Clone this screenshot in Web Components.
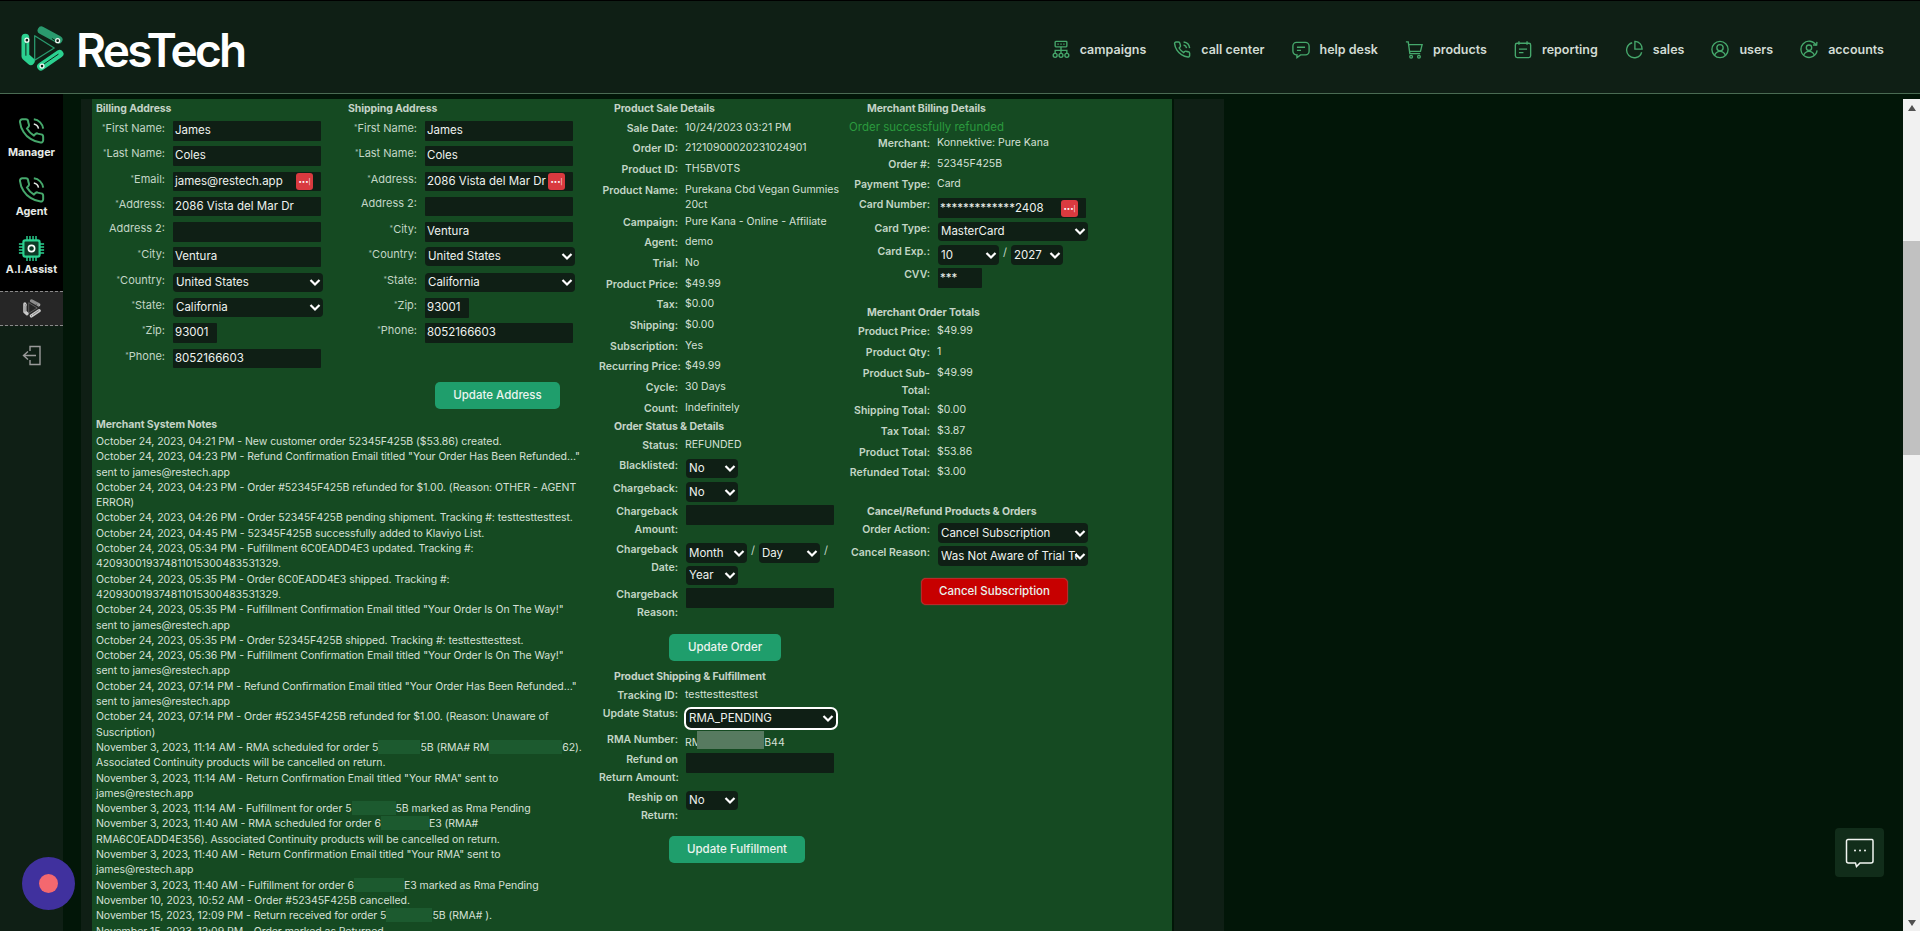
<!DOCTYPE html>
<html>
<head>
<meta charset="utf-8">
<title>ResTech</title>
<style>
  html, body { margin: 0; height: 100%; overflow: hidden; background: #021608; }
  body { font-family: "Inter", "Liberation Sans", sans-serif; }
</style>
</head>
<body>
<order-page></order-page>
<script>
const KEY_CSS = `
  .key { position: absolute; right: 8px; top: 1.5px; width: 17px; height: 17px; border-radius: 3px; background: #d93a3f; color: #fff; font-size: 6px; line-height: 17px; text-align: center; }
`;
const PHONE = `<path d="M22 16.9v3a2 2 0 0 1-2.2 2 19.8 19.8 0 0 1-8.600-3.100 19.500 19.500 0 0 1-6-6 19.800 19.800 0 0 1-3.100-8.700A2 2 0 0 1 4.100 2h3a2 2 0 0 1 2 1.700c.1 1 .4 1.900.7 2.800a2 2 0 0 1-.5 2.100L8.100 9.900a16 16 0 0 0 6 6l1.300-1.300a2 2 0 0 1 2.100-.4c.9.300 1.800.6 2.800.7a2 2 0 0 1 1.700 2z"/>`;

class BrandLogo extends HTMLElement {
  constructor() {
    super();
    this.attachShadow({ mode: 'open' });
    const bright = this.getAttribute('color') || '#2bd190';
    const dim = this.getAttribute('dim') || '#2a9a6e';
    const ring = this.getAttribute('ring') || '#f4f8f5';
    const bg = this.getAttribute('bg') || '#0f1f15';
    const w = this.getAttribute('size') || 44;
    this.shadowRoot.innerHTML = `
      <style>:host { display: inline-flex; } svg { display: block; }</style>
      <svg width="${w}" height="${w * 48 / 44}" viewBox="0 0 44 48" fill="none" stroke-linecap="round" stroke-linejoin="round">
        <path d="M14 10 L14 35 L34 22.500 Z" stroke="${dim}" stroke-width="1.300"/>
        <path d="M4.500 12 V31 L10 36" stroke="${bright}" stroke-width="8"/>
        <path d="M21 4.500 L38.500 14" stroke="${dim}" stroke-width="8"/>
        <path d="M20.500 41.500 L39.500 28.500" stroke="${bright}" stroke-width="8"/>
        <path d="M32 13 L36 15.500 M24 38.500 L38 29 M5 18 V30" stroke="${bg}" stroke-width="1"/>
        <circle cx="6" cy="14.500" r="2" fill="${bg}" stroke="${ring}" stroke-width="1.300"/>
        <circle cx="37.500" cy="15" r="2" fill="${bg}" stroke="${ring}" stroke-width="1.300"/>
        <circle cx="21.500" cy="41" r="2" fill="${bg}" stroke="${ring}" stroke-width="1.300"/>
      </svg>`;
  }
}
customElements.define('brand-logo', BrandLogo);

const NAV_ICONS = {
  campaigns: '<rect x="3.500" y="1" width="13" height="6" rx=".8"/><path d="M6 4h1.500M9.300 4h1.500M12.500 4h1.500M10 7v4M3.500 14v-3h13v3M10 11v3"/><circle cx="3.500" cy="16.500" r="2.200"/><circle cx="10" cy="16.500" r="2.200"/><circle cx="16.500" cy="16.500" r="2.200"/>',
  call: '<g transform="scale(.84)" stroke-width="1.900">' + PHONE + '<path d="M14 2a9 9 0 0 1 8 8M14 6a5 5 0 0 1 4 4"/></g>',
  help: '<path d="M5 2h10a4 4 0 0 1 4 4v6a4 4 0 0 1-4 4H9.500L5.500 19v-3.100A4 4 0 0 1 1 12V6a4 4 0 0 1 4-4z"/><path d="M5.500 7.500h9M5.500 11h4.500"/>',
  products: '<path d="M1 1.500h2.600l1.800 13h11.500"/><path d="M4 4.500h15l-1.800 7.500H5"/><circle cx="6.800" cy="18" r="1.500"/><circle cx="15.500" cy="18" r="1.500"/>',
  reporting: '<rect x="1.500" y="3" width="17" height="16" rx="2"/><path d="M5.500 .8v4M14.500 .8v4M5.500 9.500h9M5.500 13.500h5"/>',
  sales: '<path d="M8 2.500A8.500 8.500 0 1 0 18.500 13"/><path d="M11 1h.5a8 8 0 0 1 7.500 8.500h-8z"/>',
  users: '<circle cx="10" cy="10" r="9"/><circle cx="10" cy="8" r="3.500"/><path d="M4 16.500c1-3 3-4.500 6-4.500s5 1.500 6 4.500"/>',
  accounts: '<path d="M18 5.500A9 9 0 1 0 19 11"/><path d="M14.500 5h4l.3-3.500"/><circle cx="10" cy="8" r="3"/><path d="M4 16.500c1-3 3-4.500 6-4.500s5 1.500 6 4.500"/>'
};

class NavLink extends HTMLElement {
  constructor() {
    super();
    this.attachShadow({ mode: 'open' });
    this.shadowRoot.innerHTML = `
      <style>
        :host { display: inline-flex; align-items: center; gap: 10px; color: #d2dcd4; font-size: 12.500px; font-weight: 600; }
        svg { display: block; fill: none; stroke: #46a86c; stroke-width: 1.500; }
      </style>
      <svg width="18" height="19" viewBox="0 0 20 20">${NAV_ICONS[this.getAttribute('icon')]}</svg>
      <slot></slot>`;
  }
}
customElements.define('nav-link', NavLink);

class AppHeader extends HTMLElement {
  constructor() {
    super();
    this.attachShadow({ mode: 'open' });
    this.shadowRoot.innerHTML = `
      <style>
        :host { display: flex; flex: none; height: 94px; padding: 5px 36px 0 21px; box-sizing: border-box; align-items: center; justify-content: space-between;
          background: #0f1f15; border-top: 1px solid #000; border-bottom: 1px solid #4a6b53; }
        .brand { display: flex; align-items: center; gap: 12px; }
        .name { color: #fff; font-size: 46px; font-weight: 600; letter-spacing: -2.700px; line-height: 1; }
        nav { display: flex; align-items: center; gap: 27px; }
      </style>
      <div class="brand"><brand-logo size="43"></brand-logo><span class="name">ResTech</span></div>
      <nav>
        <nav-link icon="campaigns">campaigns</nav-link>
        <nav-link icon="call">call center</nav-link>
        <nav-link icon="help">help desk</nav-link>
        <nav-link icon="products">products</nav-link>
        <nav-link icon="reporting">reporting</nav-link>
        <nav-link icon="sales">sales</nav-link>
        <nav-link icon="users">users</nav-link>
        <nav-link icon="accounts">accounts</nav-link>
      </nav>`;
  }
}
customElements.define('app-header', AppHeader);

class SideItem extends HTMLElement {
  constructor() {
    super();
    this.attachShadow({ mode: 'open' });
    this.shadowRoot.innerHTML = `
      <style>
        :host { display: flex; flex-direction: column; align-items: center; color: #e6ebe7; font-size: 10.800px; font-weight: 700; line-height: 14px; gap: 1px; }
        ::slotted(svg) { display: block; }
      </style>
      <slot name="icon"></slot><slot></slot>`;
  }
}
customElements.define('side-item', SideItem);

class AppSidebar extends HTMLElement {
  constructor() {
    super();
    this.attachShadow({ mode: 'open' });
    const phone = `<svg slot="icon" width="29" height="28" viewBox="0 0 24 24" fill="none" stroke="#46a86c" stroke-width="1.700">${PHONE}<path d="M14 2a9 9 0 0 1 8 8"/><path d="M14 6a5 5 0 0 1 4 4" stroke="#e6ebe7" stroke-width="1.300"/></svg>`;
    this.shadowRoot.innerHTML = `
      <style>
        :host { display: flex; flex: none; width: 63px; flex-direction: column; background: #0f1f15; }
        .items { display: flex; flex-direction: column; gap: 16px; align-items: center; padding: 23px 0 14px; background: #000; }
        .switch { display: flex; align-items: center; justify-content: center; height: 33px; background: #262626;
          border-top: 1px dashed #8a8a8a; border-bottom: 1px dashed #8a8a8a; }
        .out { display: flex; justify-content: center; padding-top: 19px; }
      </style>
      <div class="items">
        <side-item>${phone}Manager</side-item>
        <side-item>${phone}Agent</side-item>
        <side-item>
          <svg slot="icon" width="27" height="27" viewBox="0 0 30 30" fill="none" stroke="#2bd190" stroke-width="1.600">
            <rect x="6" y="6" width="18" height="18" rx="2" fill="#0d3a26" stroke-width="2.400"/>
            <path d="M10 1v5M13.300 1v5M16.700 1v5M20 1v5M10 24v5M13.300 24v5M16.700 24v5M20 24v5M1 10h5M1 13.300h5M1 16.700h5M1 20h5M24 10h5M24 13.300h5M24 16.700h5M24 20h5"/>
            <circle cx="15" cy="15" r="3.500" stroke="#fff" stroke-width="1.800"/>
          </svg>A.I.Assist
        </side-item>
      </div>
      <div class="switch"><brand-logo size="18" color="#c8c8c8" dim="#8c8c8c" ring="#e8e8e8" bg="#262626"></brand-logo></div>
      <div class="out">
        <svg width="20" height="21" viewBox="0 0 20 21" fill="none" stroke="#9a9a9a" stroke-width="1.400">
          <path d="M8 6V1.500h10V19.500H8V15M14 10.500H2M6 6.500L1.500 10.500 6 14.500"/>
        </svg>
      </div>`;
  }
}
customElements.define('app-sidebar', AppSidebar);

class PanelHeading extends HTMLElement {
  constructor() {
    super();
    this.attachShadow({ mode: 'open' });
    this.shadowRoot.innerHTML = `
      <style>:host { display: block; color: #c4d3c7; font-size: 10.500px; font-weight: 700; line-height: 14px; letter-spacing: -.1px; white-space: nowrap; }</style>
      <slot></slot>`;
  }
}
customElements.define('panel-heading', PanelHeading);

// address row: label column and a dark input box
class AddrField extends HTMLElement {
  constructor() {
    super();
    this.attachShadow({ mode: 'open' });
    const w = this.getAttribute('w') || 148;
    const star = this.hasAttribute('req') ? '<i>*</i>' : '';
    const key = this.hasAttribute('key-btn') ? '<span class="key">•••|</span>' : '';
    const sel = this.hasAttribute('select');
    this.shadowRoot.innerHTML = `
      <style>
        :host { display: block; height: 25.300px; }
        .row { display: flex; }
        .lbl { flex: none; width: 69px; padding-right: 8px; text-align: right; font-size: 11px; line-height: 15px; color: #c3d6c6; white-space: nowrap; }
        i { font-style: normal; font-size: 7px; vertical-align: 2px; color: #9fb8a5; }
        .in { position: relative; box-sizing: border-box; width: ${w}px; height: 19.500px; line-height: 19.500px; margin-top: 1px; padding: 0 2px; overflow: hidden;
          background: #0f1f15; color: #eef2ee; font-size: 11.500px; white-space: nowrap; border-radius: 1px; }
        select-box { margin-top: 1px; }
        ${KEY_CSS}
      </style>
      <div class="row">
        <span class="lbl">${star}${this.getAttribute('label')}:</span>
        ${sel ? `<select-box w="150"><slot></slot></select-box>` : `<div class="in"><slot></slot>${key}</div>`}
      </div>`;
  }
}
customElements.define('addr-field', AddrField);

class SelectBox extends HTMLElement {
  constructor() {
    super();
    this.attachShadow({ mode: 'open' });
    const focus = this.hasAttribute('focus');
    this.shadowRoot.innerHTML = `
      <style>
        :host { display: inline-flex; vertical-align: top; align-items: center; box-sizing: border-box; width: ${this.getAttribute('w') || 52}px; height: ${this.getAttribute('h') || 19}px;
          background: #0f1f15; color: #eef2ee; font-size: 11.500px; line-height: 15px; border-radius: 4px; padding: 0 2px 0 3px; white-space: nowrap;
          ${focus ? 'outline: 2px solid #fff; margin-top: 2px; border-radius: 5px;' : ''} }
        span { flex: 1; min-width: 0; overflow: hidden; }
        svg { flex: none; margin-left: -3px; }
      </style>
      <span><slot></slot></span>
      <svg width="12" height="9" viewBox="0 0 12 9" fill="none" stroke="#fff" stroke-width="2.200"><path d="M1.500 2l4.500 4.500L10.500 2"/></svg>`;
  }
}
customElements.define('select-box', SelectBox);

// detail row with bold label on the left, any value on the right
class InfoRow extends HTMLElement {
  constructor() {
    super();
    this.attachShadow({ mode: 'open' });
    const w = this.getAttribute('lw') || 86;
    const h = this.getAttribute('rh') || 20.7;
    this.shadowRoot.innerHTML = `
      <style>
        :host { display: flex; min-height: ${h}px; height: ${h}px; font-size: 10.500px; line-height: 15px; color: #d5e0d7; }
        .lbl { flex: none; width: ${w}px; text-align: right; padding-right: 7px; box-sizing: border-box; font-weight: 600; color: #c3d6c6; line-height: 17.500px; white-space: pre;
          ${this.hasAttribute('ctl') ? 'margin-top: -2px;' : ''} }
        .val { flex: 1; min-width: 0; }
        ::slotted(select-box), ::slotted(dark-input), ::slotted(.inline) { margin-left: 1px; }
      </style>
      <span class="lbl">${this.getAttribute('label')}:</span>
      <div class="val"><slot></slot></div>`;
  }
}
customElements.define('info-row', InfoRow);

class DarkInput extends HTMLElement {
  constructor() {
    super();
    this.attachShadow({ mode: 'open' });
    const key = this.hasAttribute('key-btn') ? '<span class="key">•••|</span>' : '';
    this.shadowRoot.innerHTML = `
      <style>
        :host { display: block; position: relative; box-sizing: border-box; width: ${this.getAttribute('w') || 148}px; height: 20px; line-height: 20px;
          background: #0f1f15; color: #eef2ee; font-size: 11.500px; padding: 0 2px; overflow: hidden; border-radius: 1px; }
        ${KEY_CSS}
      </style>
      <slot></slot>${key}`;
  }
}
customElements.define('dark-input', DarkInput);

class ActionButton extends HTMLElement {
  constructor() {
    super();
    this.attachShadow({ mode: 'open' });
    const red = this.hasAttribute('danger');
    this.shadowRoot.innerHTML = `
      <style>
        :host { display: block; box-sizing: border-box; width: ${this.getAttribute('w')}px; height: 27px; line-height: ${red ? 25 : 27}px; font-size: 11.500px; font-weight: 500; color: #eaf4ee; text-align: center;
          white-space: nowrap; border-radius: 5px; background: ${red ? '#c70000' : '#1f9e6c'}; ${red ? 'border: 1px solid #b52b2b; box-shadow: 0 0 1px #e04444;' : ''} }
      </style>
      <slot></slot>`;
  }
}
customElements.define('action-button', ActionButton);

class BlurMask extends HTMLElement {
  constructor() {
    super();
    this.attachShadow({ mode: 'open' });
    this.shadowRoot.innerHTML = `
      <style>:host { display: inline-block; width: ${this.getAttribute('w')}px; height: ${this.getAttribute('h') || 14}px; vertical-align: -3px; background: ${this.getAttribute('bg') || '#1c5a2f'}; }</style>`;
  }
}
customElements.define('blur-mask', BlurMask);

class SystemNotes extends HTMLElement {
  constructor() {
    super();
    this.attachShadow({ mode: 'open' });
    this.shadowRoot.innerHTML = `
      <style>
        :host { display: block; font-size: 10.500px; letter-spacing: -.05px; line-height: 15.300px; color: #d5e0d7; white-space: nowrap; margin-top: 2px; }
        ::slotted(p) { margin: 0; }
      </style>
      <slot></slot>`;
  }
}
customElements.define('system-notes', SystemNotes);

class OrderPanel extends HTMLElement {
  constructor() {
    super();
    this.attachShadow({ mode: 'open' });
    this.shadowRoot.innerHTML = `
      <style>
        :host { display: grid; grid-template-columns: 507px 250px 323px; width: 1080px; flex: none; background: #154a22; box-sizing: border-box; padding-top: 3px; height: 1000px; align-content: start; }
        .left { padding-left: 4px; }
        .addr { display: grid; grid-template-columns: 252px 1fr; height: 280px; }
        .addr panel-heading { margin-bottom: 4px; }
        .btn-wrap { padding-left: 339px; height: 36px; }
        .mid panel-heading { padding-left: 15px; margin-bottom: 2.500px; }
        .mid panel-heading.first { margin-bottom: 3.500px; }
        .right panel-heading { padding-left: 18px; margin-bottom: 2.500px; }
        .right panel-heading.first { margin-bottom: 4px; }
        .right panel-heading.ctl { margin-bottom: 4px; }
        .ok { color: #2b9a3e; font-size: 11.500px; line-height: 14px; margin-bottom: .5px; white-space: nowrap; }
        .inline { display: flex; align-items: flex-start; flex-wrap: wrap; row-gap: 3px; }
        .slash { width: 12px; text-align: center; color: #c3d6c6; font-size: 11px; line-height: 14px; }
        .mid-btn { padding-left: 70px; }
        .mid-btn.order { height: 36px; }
        .cancel { padding-left: 72px; }
        .rma { margin-left: -4px; }
      </style>
      <div class="left">
        <div class="addr">
          <div>
            <panel-heading>Billing Address</panel-heading>
            <addr-field req label="First Name">James</addr-field>
            <addr-field req label="Last Name">Coles</addr-field>
            <addr-field req key-btn label="Email">james@restech.app</addr-field>
            <addr-field req label="Address">2086 Vista del Mar Dr</addr-field>
            <addr-field label="Address 2"></addr-field>
            <addr-field req label="City">Ventura</addr-field>
            <addr-field req select label="Country">United States</addr-field>
            <addr-field req select label="State">California</addr-field>
            <addr-field req w="44" label="Zip">93001</addr-field>
            <addr-field req label="Phone">8052166603</addr-field>
          </div>
          <div>
            <panel-heading>Shipping Address</panel-heading>
            <addr-field req label="First Name">James</addr-field>
            <addr-field req label="Last Name">Coles</addr-field>
            <addr-field req key-btn label="Address">2086 Vista del Mar Dr</addr-field>
            <addr-field label="Address 2"></addr-field>
            <addr-field req label="City">Ventura</addr-field>
            <addr-field req select label="Country">United States</addr-field>
            <addr-field req select label="State">California</addr-field>
            <addr-field req w="44" label="Zip">93001</addr-field>
            <addr-field req label="Phone">8052166603</addr-field>
          </div>
        </div>
        <div class="btn-wrap"><action-button w="125">Update Address</action-button></div>
        <panel-heading>Merchant System Notes</panel-heading>
        <slot name="notes"></slot>
      </div>
      <div class="mid">
        <panel-heading class="first">Product Sale Details</panel-heading>
        <info-row label="Sale Date">10/24/2023 03:21 PM</info-row>
        <info-row label="Order ID">21210900020231024901</info-row>
        <info-row label="Product ID">TH5BV0TS</info-row>
        <info-row label="Product Name" rh="32">Purekana Cbd Vegan Gummies<br>20ct</info-row>
        <info-row label="Campaign">Pure Kana - Online - Affiliate</info-row>
        <info-row label="Agent">demo</info-row>
        <info-row label="Trial">No</info-row>
        <info-row label="Product Price">$49.99</info-row>
        <info-row label="Tax">$0.00</info-row>
        <info-row label="Shipping">$0.00</info-row>
        <info-row label="Subscription">Yes</info-row>
        <info-row label="Recurring Price">$49.99</info-row>
        <info-row label="Cycle">30 Days</info-row>
        <info-row label="Count">Indefinitely</info-row>
        <panel-heading>Order Status &amp; Details</panel-heading>
        <info-row label="Status" rh="22">REFUNDED</info-row>
        <info-row ctl label="Blacklisted" rh="23.500"><select-box>No</select-box></info-row>
        <info-row ctl label="Chargeback" rh="23"><select-box h="20">No</select-box></info-row>
        <info-row ctl label="Chargeback&#10;Amount" rh="38"><dark-input></dark-input></info-row>
        <info-row ctl label="Chargeback&#10;Date" rh="45">
          <div class="inline"><select-box w="61" h="20">Month</select-box><span class="slash">/</span><select-box w="61" h="20">Day</select-box><span class="slash">/</span><select-box>Year</select-box></div>
        </info-row>
        <info-row ctl label="Chargeback&#10;Reason" rh="46"><dark-input></dark-input></info-row>
        <div class="mid-btn order"><action-button w="112">Update Order</action-button></div>
        <panel-heading>Product Shipping &amp; Fulfillment</panel-heading>
        <info-row label="Tracking ID" rh="20.500">testtesttesttest</info-row>
        <info-row ctl label="Update Status" rh="23.500"><select-box w="150" focus>RMA_PENDING</select-box></info-row>
        <info-row label="RMA Number" rh="22.500">RM<blur-mask class="rma" w="67" h="18" bg="#577a60"></blur-mask>B44</info-row>
        <info-row ctl label="Refund on&#10;Return Amount" rh="38"><dark-input></dark-input></info-row>
        <info-row ctl label="Reship on&#10;Return" rh="45"><select-box>No</select-box></info-row>
        <div class="mid-btn"><action-button w="136">Update Fulfillment</action-button></div>
      </div>
      <div class="right">
        <panel-heading class="first">Merchant Billing Details</panel-heading>
        <div class="ok">Order successfully refunded</div>
        <info-row lw="88" rh="21" label="Merchant">Konnektive: Pure Kana</info-row>
        <info-row lw="88" rh="20.500" label="Order #">52345F425B</info-row>
        <info-row lw="88" rh="22" label="Payment Type">Card</info-row>
        <info-row ctl lw="88" rh="24.200" label="Card Number"><dark-input key-btn>*************2408</dark-input></info-row>
        <info-row ctl lw="88" rh="23" label="Card Type"><select-box w="150">MasterCard</select-box></info-row>
        <info-row ctl lw="88" rh="23" label="Card Exp."><div class="inline"><select-box w="61" h="20">10</select-box><span class="slash">/</span><select-box h="20">2027</select-box></div></info-row>
        <info-row ctl lw="88" rh="38" label="CVV"><dark-input w="44">***</dark-input></info-row>
        <panel-heading>Merchant Order Totals</panel-heading>
        <info-row lw="88" rh="21" label="Product Price">$49.99</info-row>
        <info-row lw="88" rh="21" label="Product Qty">1</info-row>
        <info-row lw="88" rh="37" label="Product Sub-&#10;Total">$49.99</info-row>
        <info-row lw="88" rh="21" label="Shipping Total">$0.00</info-row>
        <info-row lw="88" rh="21" label="Tax Total">$3.87</info-row>
        <info-row lw="88" rh="20" label="Product Total">$53.86</info-row>
        <info-row lw="88" rh="41.500" label="Refunded Total">$3.00</info-row>
        <panel-heading class="ctl">Cancel/Refund Products &amp; Orders</panel-heading>
        <info-row ctl lw="88" rh="23" label="Order Action"><select-box w="150" h="20">Cancel Subscription</select-box></info-row>
        <info-row ctl lw="88" rh="32" label="Cancel Reason"><select-box w="150" h="20">Was Not Aware of Trial Te</select-box></info-row>
        <div class="cancel"><action-button danger w="147">Cancel Subscription</action-button></div>
      </div>`;
  }
}
customElements.define('order-panel', OrderPanel);

class FakeScrollbar extends HTMLElement {
  constructor() {
    super();
    this.attachShadow({ mode: 'open' });
    this.shadowRoot.innerHTML = `
      <style>
        :host { display: flex; flex-direction: column; flex: none; width: 17px; margin-top: 5px; background: #f1f1f1; }
        .arrow { flex: none; height: 17px; display: flex; align-items: center; justify-content: center; color: #505050; }
        .gap { flex: none; height: 125px; }
        .thumb { flex: none; height: 214px; background: #c1c1c1; }
        .rest { flex: 1; }
      </style>
      <div class="arrow"><svg width="8" height="6"><path d="M4 0l4 6H0z" fill="currentColor"/></svg></div>
      <div class="gap"></div><div class="thumb"></div><div class="rest"></div>
      <div class="arrow"><svg width="8" height="6"><path d="M0 0h8L4 6z" fill="currentColor"/></svg></div>`;
  }
}
customElements.define('fake-scrollbar', FakeScrollbar);

class ChatButton extends HTMLElement {
  constructor() {
    super();
    this.attachShadow({ mode: 'open' });
    this.shadowRoot.innerHTML = `
      <style>
        :host { position: fixed; left: 1835px; top: 828px; width: 49px; height: 49px; background: #112d1a; border-radius: 4px; display: flex; align-items: center; justify-content: center; }
      </style>
      <svg width="30" height="30" viewBox="0 0 30 30" fill="none" stroke="#f2f6f2" stroke-width="1.500">
        <path d="M3 1.500h24a1.500 1.500 0 0 1 1 1.500v20a2 2 0 0 1-2 2H15l-3.500 3.500-1-3.500H3.500a2 2 0 0 1-2-2V3a1.500 1.500 0 0 1 1.500-1.500z"/>
        <circle cx="10" cy="12.500" r="1" fill="#f2f6f2" stroke="none"/><circle cx="15" cy="12.500" r="1" fill="#f2f6f2" stroke="none"/><circle cx="20" cy="12.500" r="1" fill="#f2f6f2" stroke="none"/>
      </svg>`;
  }
}
customElements.define('chat-button', ChatButton);

class RecordButton extends HTMLElement {
  constructor() {
    super();
    this.attachShadow({ mode: 'open' });
    this.shadowRoot.innerHTML = `
      <style>
        :host { position: fixed; left: 22px; top: 857px; width: 53px; height: 53px; border-radius: 50%; background: #40319e; display: flex; align-items: center; justify-content: center; }
        i { width: 19px; height: 19px; border-radius: 50%; background: #f4686f; }
      </style><i></i>`;
  }
}
customElements.define('record-button', RecordButton);

class OrderPage extends HTMLElement {
  constructor() {
    super();
    this.attachShadow({ mode: 'open' });
    const notes = [
      'October 24, 2023, 04:21 PM - New customer order 52345F425B ($53.86) created.',
      'October 24, 2023, 04:23 PM - Refund Confirmation Email titled "Your Order Has Been Refunded..."<br>sent to james@restech.app',
      'October 24, 2023, 04:23 PM - Order #52345F425B refunded for $1.00. (Reason: OTHER - AGENT<br>ERROR)',
      'October 24, 2023, 04:26 PM - Order 52345F425B pending shipment. Tracking #: testtesttesttest.',
      'October 24, 2023, 04:45 PM - 52345F425B successfully added to Klaviyo List.',
      'October 24, 2023, 05:34 PM - Fulfillment 6C0EADD4E3 updated. Tracking #:<br>420930019374811015300483531329.',
      'October 24, 2023, 05:35 PM - Order 6C0EADD4E3 shipped. Tracking #:<br>420930019374811015300483531329.',
      'October 24, 2023, 05:35 PM - Fulfillment Confirmation Email titled "Your Order Is On The Way!"<br>sent to james@restech.app',
      'October 24, 2023, 05:35 PM - Order 52345F425B shipped. Tracking #: testtesttesttest.',
      'October 24, 2023, 05:36 PM - Fulfillment Confirmation Email titled "Your Order Is On The Way!"<br>sent to james@restech.app',
      'October 24, 2023, 07:14 PM - Refund Confirmation Email titled "Your Order Has Been Refunded..."<br>sent to james@restech.app',
      'October 24, 2023, 07:14 PM - Order #52345F425B refunded for $1.00. (Reason: Unaware of<br>Suscription)',
      'November 3, 2023, 11:14 AM - RMA scheduled for order 5<blur-mask w="42"></blur-mask>5B (RMA# RM<blur-mask w="73"></blur-mask>62).<br>Associated Continuity products will be cancelled on return.',
      'November 3, 2023, 11:14 AM - Return Confirmation Email titled "Your RMA" sent to<br>james@restech.app',
      'November 3, 2023, 11:14 AM - Fulfillment for order 5<blur-mask w="44"></blur-mask>5B marked as Rma Pending',
      'November 3, 2023, 11:40 AM - RMA scheduled for order 6<blur-mask w="48"></blur-mask>E3 (RMA#<br>RMA6C0EADD4E356). Associated Continuity products will be cancelled on return.',
      'November 3, 2023, 11:40 AM - Return Confirmation Email titled "Your RMA" sent to<br>james@restech.app',
      'November 3, 2023, 11:40 AM - Fulfillment for order 6<blur-mask w="50"></blur-mask>E3 marked as Rma Pending',
      'November 10, 2023, 10:52 AM - Order #52345F425B cancelled.',
      'November 15, 2023, 12:09 PM - Return received for order 5<blur-mask w="46"></blur-mask>5B (RMA# ).',
      'November 15, 2023, 12:09 PM - Order marked as Returned.'
    ].map(t => `<p>${t}</p>`).join('');
    this.shadowRoot.innerHTML = `
      <style>
        :host { display: flex; flex-direction: column; height: 931px; overflow: hidden; background: #021608; }
        .body { flex: 1; display: flex; min-height: 0; }
        .stage { flex: 1; display: flex; min-width: 0; overflow: hidden; padding-top: 5px; padding-left: 18px; }
        .gutter { flex: none; width: 11px; background: #0f1f15; }
        .strip { flex: none; width: 50px; margin-left: 2px; background: #0f1f15; }
      </style>
      <app-header></app-header>
      <div class="body">
        <app-sidebar></app-sidebar>
        <div class="stage">
          <div class="gutter"></div>
          <order-panel><system-notes slot="notes">${notes}</system-notes></order-panel>
          <div class="strip"></div>
        </div>
        <fake-scrollbar></fake-scrollbar>
      </div>
      <record-button></record-button>
      <chat-button></chat-button>`;
  }
}
customElements.define('order-page', OrderPage);
</script>
</body>
</html>
